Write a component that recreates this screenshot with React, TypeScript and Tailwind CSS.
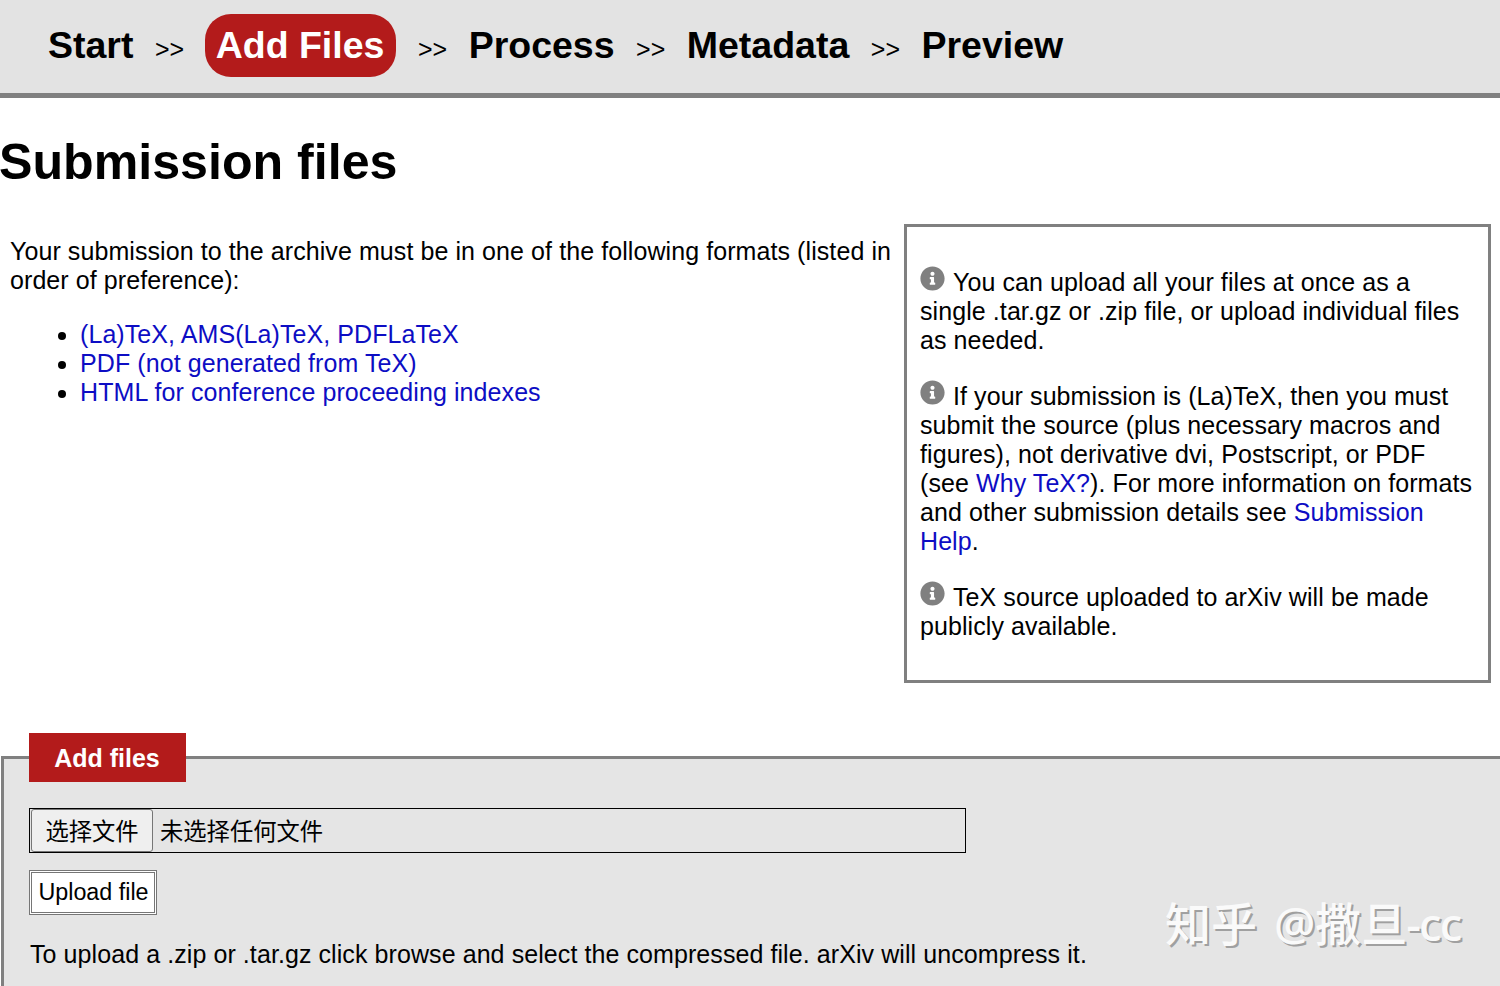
import { FaInfoCircle } from "react-icons/fa";

const STEPS = ["Start", "Add Files", "Process", "Metadata", "Preview"];
const ACTIVE = "Add Files";

const InfoIcon = () => (
  <FaInfoCircle size={25} className="inline-block align-baseline -mt-[8px] mr-[8px] text-[#808080]" />
);

const A = ({ children }: { children: React.ReactNode }) => (
  <a href="#" className="text-[#0d0dc4]">
    {children}
  </a>
);

export default function App() {
  return (
    <div className="relative w-[1500px] h-[986px] overflow-hidden bg-white text-black text-[25px] leading-[29px] tracking-[0.08px] font-['Liberation_Sans',sans-serif]">
      {/* Step bar */}
      <nav className="h-[98px] bg-[#e3e3e3] border-b-[5px] border-[#808080] pl-[48px] pb-[2px] flex items-center text-[37.5px] font-bold tracking-normal">
        {STEPS.map((step, i) => (
          <div key={step} className="flex items-center">
            {step === ACTIVE ? (
              <span className="h-[63px] -ml-[1px] pl-[11px] pr-[12px] rounded-[26px] bg-[#b31b1b] text-white flex items-center">{step}</span>
            ) : (
              <span>{step}</span>
            )}
            {i < STEPS.length - 1 && (
              <span className="font-normal text-[25px] mx-[21.5px] mt-[7px]">&gt;&gt;</span>
            )}
          </div>
        ))}
      </nav>

      <h1 className="text-[50.15px] leading-[58px] font-bold mt-[35px] -ml-[1px] tracking-normal">Submission files</h1>

      <div className="flex mt-[33px]">
        <div className="w-[904px] pl-[10px] pr-[8px] pt-[13px]">
          <p>Your submission to the archive must be in one of the following formats (listed in order of preference):</p>
          <ul className="list-disc pl-[70px] mt-[25px]">
            <li><A>(La)TeX, AMS(La)TeX, PDFLaTeX</A></li>
            <li><A>PDF (not generated from TeX)</A></li>
            <li><A>HTML for conference proceeding indexes</A></li>
          </ul>
        </div>
        <aside className="w-[587px] h-[459px] border-[3px] border-[#808080] pl-[13px] pr-[12px] pt-[41px]">
          <p><InfoIcon />You can upload all your files at once as a single .tar.gz or .zip file, or upload individual files as needed.</p>
          <p className="mt-[27px]"><InfoIcon />If your submission is (La)TeX, then you must submit the source (plus necessary macros and figures), not derivative dvi, Postscript, or PDF (see <A>Why TeX?</A>). For more information on formats and other submission details see <A>Submission Help</A>.</p>
          <p className="mt-[27px]"><InfoIcon />TeX source uploaded to arXiv will be made publicly available.</p>
        </aside>
      </div>

      {/* Add files form */}
      <fieldset className="mt-[50px] ml-[1px] w-[1520px] h-[300px] bg-[#e5e5e5] border-[3px] border-[#808080] pl-[25px]">
        <legend className="w-[157px] h-[49px] pt-[1px] pr-[1px] bg-[#b31b1b] text-white font-bold text-[25px] tracking-normal flex items-center justify-center">Add files</legend>
        <div className="mt-[26px] w-[937px] h-[45px] border border-black flex items-center text-[23.3px] tracking-normal font-['Liberation_Sans','Noto_Sans_CJK_SC',sans-serif]">
          <button className="h-[43px] w-[122px] pt-[3px] bg-[#efefef] border border-[#767676] rounded-[3px] ml-[1px]">选择文件</button>
          <span className="ml-[7px] pt-[3px]">未选择任何文件</span>
        </div>
        <button className="block mt-[17px] w-[128px] h-[45px] pl-[1px] bg-white border-[3px] border-double border-[#767676] text-[23.3px] tracking-normal">Upload file</button>
        <p className="mt-[25px] ml-[1px]">To upload a .zip or .tar.gz click browse and select the compressed file. arXiv will uncompress it.</p>
      </fieldset>

      {/* Watermark */}
      <div className="absolute left-[1165px] top-[896px] text-[46px] leading-[54px] font-medium tracking-normal [word-spacing:5px] text-[#fafafa] whitespace-nowrap [text-shadow:2px_2px_0_#a0a0a0] font-['Noto_Sans','Noto_Sans_CJK_SC',sans-serif]">
        知乎 @撒旦<span className="-ml-[1px] tracking-[-2px]">-cc</span>
      </div>
    </div>
  );
}
